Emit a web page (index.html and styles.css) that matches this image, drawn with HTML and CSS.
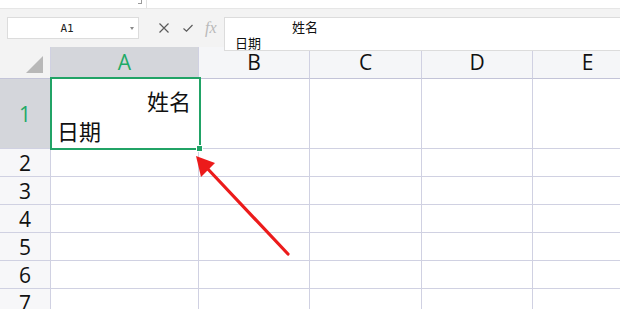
FILE: index.html
```html
<!DOCTYPE html>
<html lang="zh">
<head>
<meta charset="utf-8">
<link rel="stylesheet" href="styles.css">
</head>
<body>
<div class="page">
  <div class="topstrip">
    <div class="strip-left"><span class="launcher"></span></div>
    <div class="strip-right"></div>
  </div>
  <div class="toolbar">
    <div class="namebox">
      <span class="name-text">A1</span>
      <span class="caret"></span>
    </div>
    <div class="tools">
      <svg class="icon" width="12" height="12" viewBox="0 0 12 12"><path d="M1.5 1.5 L10.5 10.5 M10.5 1.5 L1.5 10.5" stroke="#5a5a5a" stroke-width="1.2" fill="none"/></svg>
      <svg class="icon" width="12" height="12" viewBox="0 0 12 12"><path d="M1.5 6.5 L4.5 9.2 L10.5 3" stroke="#5a5a5a" stroke-width="1.2" fill="none"/></svg>
      <span class="fx">fx</span>
    </div>
    <div class="formula">
      <div class="f-line1">姓名</div>
      <div class="f-line2">日期</div>
    </div>
  </div>
  <div class="sheet">
    <div class="corner"><span class="tri"></span></div>
    <div class="colhead sel">A</div>
    <div class="colhead">B</div>
    <div class="colhead">C</div>
    <div class="colhead">D</div>
    <div class="colhead">E</div>

    <div class="rowhead sel tall">1</div>
    <div class="cell tall active">
      <div class="c-line1">姓名</div>
      <div class="c-line2">日期</div>
    </div>
    <div class="cell tall"></div><div class="cell tall"></div><div class="cell tall"></div><div class="cell tall"></div>

    <div class="rowhead">2</div><div class="cell"></div><div class="cell"></div><div class="cell"></div><div class="cell"></div><div class="cell"></div>
    <div class="rowhead">3</div><div class="cell"></div><div class="cell"></div><div class="cell"></div><div class="cell"></div><div class="cell"></div>
    <div class="rowhead">4</div><div class="cell"></div><div class="cell"></div><div class="cell"></div><div class="cell"></div><div class="cell"></div>
    <div class="rowhead">5</div><div class="cell"></div><div class="cell"></div><div class="cell"></div><div class="cell"></div><div class="cell"></div>
    <div class="rowhead">6</div><div class="cell"></div><div class="cell"></div><div class="cell"></div><div class="cell"></div><div class="cell"></div>
    <div class="rowhead">7</div><div class="cell"></div><div class="cell"></div><div class="cell"></div><div class="cell"></div><div class="cell"></div>
  </div>
  <svg class="arrow" width="620" height="309" viewBox="0 0 620 309">
    <line x1="288" y1="254" x2="206" y2="167" stroke="#ec1b1b" stroke-width="3.2" stroke-linecap="round"/>
    <polygon points="196,156 201,177 215,163" fill="#ec1b1b"/>
  </svg>
</div>
</body>
</html>
```
FILE: styles.css
```css
* { box-sizing: border-box; }
html, body { margin: 0; padding: 0; }
body {
  width: 620px;
  height: 309px;
  overflow: hidden;
  background: #ffffff;
  font-family: "Noto Sans CJK SC", "Noto Sans", sans-serif;
}
.page {
  position: relative;
  width: 620px;
  height: 309px;
  overflow: hidden;
}
.topstrip {
  height: 9px;
  display: flex;
  background: #ffffff;
  border-bottom: 1px solid #e6e6e6;
}
.strip-left {
  width: 147px;
  position: relative;
  border-right: 1px solid #e2e2e2;
}
.launcher {
  position: absolute;
  right: 4px;
  top: 0;
  width: 4px;
  height: 4px;
  border-right: 1px solid #9a9a9a;
  border-bottom: 1px solid #9a9a9a;
}
.strip-right { flex: 1; }
.toolbar {
  height: 38px;
  background: #f3f3f3;
  display: flex;
  align-items: flex-start;
  padding: 8px 0 0 7px;
}
.namebox {
  width: 132px;
  height: 22px;
  background: #ffffff;
  border: 1px solid #dcdcdc;
  display: flex;
  align-items: center;
  position: relative;
}
.name-text {
  flex: 1;
  text-align: center;
  padding-right: 12px;
  font-family: "DejaVu Sans Mono", "Liberation Mono", monospace;
  font-size: 11px;
  color: #222;
}
.caret {
  position: absolute;
  right: 4px;
  top: 9px;
  width: 0;
  height: 0;
  border-left: 2.5px solid transparent;
  border-right: 2.5px solid transparent;
  border-top: 3px solid #8a8a8a;
}
.tools {
  width: 85px;
  height: 22px;
  display: flex;
  align-items: center;
  gap: 12px;
  padding-left: 19px;
}
.icon { display: block; }
.fx {
  font-family: "Liberation Serif", serif;
  font-style: italic;
  font-size: 16px;
  color: #b9b9b9;
  line-height: 1;
  margin-left: -1px;
}
.formula {
  position: relative;
  z-index: 2;
  flex: 1;
  height: 34px;
  background: #ffffff;
  border: 1px solid #dcdcdc;
  border-right: none;
  font-size: 13px;
  color: #111;
  line-height: 16px;
  padding-top: 1px;
}
.f-line1 { padding-left: 67px; }
.f-line2 { padding-left: 10px; }

.sheet {
  display: grid;
  grid-template-columns: 51px 148px 111px 112px 111px 110px;
  grid-template-rows: 32px 70px 28px 28px 28px 28px 28px 28px;
}
.corner {
  background: #f3f3f3;
  border-right: 1px solid #d0d1e2;
  border-bottom: 1px solid #c3c4d8;
  position: relative;
}
.tri {
  position: absolute;
  right: 7px;
  bottom: 5px;
  width: 0;
  height: 0;
  border-left: 17px solid transparent;
  border-bottom: 17px solid #b8b8b8;
}
.colhead {
  background: #f5f6f8;
  border-right: 1px solid #d0d1e2;
  border-bottom: 1px solid #c3c4d8;
  display: flex;
  align-items: center;
  justify-content: center;
  font-family: "Open Sans", "Noto Sans", sans-serif;
  font-size: 21px;
  color: #111;
  padding-bottom: 1px;
}
.colhead.sel {
  background: #d4d6db;
  color: #1faa66;
  border-bottom: 2px solid #21a366;
}
.rowhead {
  background: #f7f7f9;
  border-right: 1px solid #d0d1e2;
  border-bottom: 1px solid #d0d1e2;
  display: flex;
  align-items: center;
  justify-content: center;
  font-family: "Open Sans", "Noto Sans", sans-serif;
  font-size: 21px;
  color: #111;
}
.rowhead.sel {
  background: #d4d6db;
  color: #1faa66;
}
.cell {
  background: #ffffff;
  border-right: 1px solid #d0d1e2;
  border-bottom: 1px solid #d0d1e2;
}
.cell.active {
  position: relative;
  border: none;
  font-size: 22px;
  line-height: 30px;
  color: #111;
  padding: 6px 0 0 0;
}
.cell.active::after {
  content: "";
  position: absolute;
  left: -1px;
  top: -2px;
  right: -2px;
  bottom: -1px;
  border: 2px solid #21a366;
  pointer-events: none;
}
.cell.active::before {
  content: "";
  position: absolute;
  right: -4px;
  bottom: -3px;
  width: 5px;
  height: 5px;
  background: #21a366;
  border: 1px solid #ffffff;
  z-index: 1;
}
.c-line1 { text-align: right; padding-right: 8px; }
.c-line2 { padding-left: 6px; }
.arrow {
  position: absolute;
  left: 0;
  top: 0;
  z-index: 5;
  pointer-events: none;
}
```
